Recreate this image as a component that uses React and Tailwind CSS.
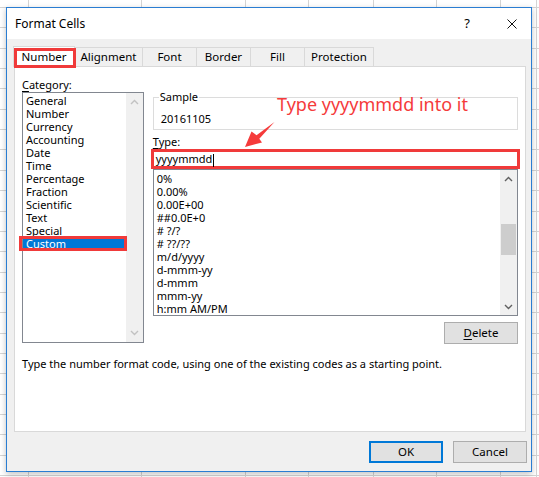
import React from 'react';

const gridCols = [28, 141, 245, 308, 373, 436, 500, 536];
const gridRows = Array.from({ length: 24 }, (_, i) => 7 + Math.round(i * 20.35));

const categories = [
  'General',
  'Number',
  'Currency',
  'Accounting',
  'Date',
  'Time',
  'Percentage',
  'Fraction',
  'Scientific',
  'Text',
  'Special',
  'Custom'
];

const formats = [
  '0%',
  '0.00%',
  '0.00E+00',
  '##0.0E+0',
  '# ?/?',
  '# ??/??',
  'm/d/yyyy',
  'd-mmm-yy',
  'd-mmm',
  'mmm-yy',
  'h:mm AM/PM'
];

const tabs = [
  { label: 'Number', width: 62, selected: true },
  { label: 'Alignment', width: 69 },
  { label: 'Font', width: 55 },
  { label: 'Border', width: 55 },
  { label: 'Fill', width: 55 },
  { label: 'Protection', width: 70 }
];

function Chevron({ up, color }) {
  return (
    <svg width="9" height="6" viewBox="0 0 9 6">
      <path
        d={up ? 'M1 5 L4.5 1.5 L8 5' : 'M1 1 L4.5 4.5 L8 1'}
        fill="none"
        stroke={color}
        strokeWidth="1.4"
      />
    </svg>
  );
}

function SpreadsheetBackground() {
  return (
    <div className="absolute inset-0 bg-white">
      {gridCols.map((x) => (
        <div key={`c${x}`} className="absolute top-0 bottom-0 w-px bg-[#d4d4d4]" style={{ left: x }} />
      ))}
      {gridRows.map((y) => (
        <div key={`r${y}`} className="absolute left-0 right-0 h-px bg-[#d4d4d4]" style={{ top: y }} />
      ))}
    </div>
  );
}

export default function App() {
  return (
    <div className="relative w-[539px] h-[477px] overflow-hidden pl-[6px] pt-[7px] font-[family-name:'Noto_Sans',sans-serif] text-[11px] text-black">
      <SpreadsheetBackground />

      <div className="relative flex h-[465px] w-[526px] flex-col border border-[#2a7dd2] bg-[#f0f0f0] shadow-[0_2px_6px_rgba(0,0,0,0.25)]">
        {/* title bar */}
        <div className="flex h-[31px] items-center bg-white pl-[8px] text-[12px]">
          <span>Format Cells</span>
          <span className="ml-auto text-[13px]">?</span>
          <svg className="ml-[37px] mr-[14px]" width="10" height="10" viewBox="0 0 10 10">
            <path d="M0.5 0.5 L9.5 9.5 M9.5 0.5 L0.5 9.5" stroke="#111" strokeWidth="1" />
          </svg>
        </div>

        {/* tabs */}
        <div className="ml-[6px] mt-[7px] flex h-[20px] items-end text-[11.5px]">
          {tabs.map((tab) => (
            <div
              key={tab.label}
              className={
                tab.selected
                  ? 'relative z-10 -mb-px flex h-[21px] items-center justify-center border border-b-0 border-[#d9d9d9] bg-white'
                  : 'relative -ml-px flex h-[19px] items-center justify-center border border-b-0 border-[#d9d9d9] bg-[#f0f0f0]'
              }
              style={{ width: tab.width }}
            >
              {tab.label}
              {tab.selected && (
                <div className="absolute left-0 top-[1px] h-[20px] w-[62px] border-[3px] border-[#f03a3a]" />
              )}
            </div>
          ))}
        </div>

        {/* panel */}
        <div className="ml-[7px] flex h-[366px] w-[512px] flex-col border border-[#d9d9d9] bg-white px-[7px] pt-[11px]">
          <div className="flex">
            <div className="w-[122px]">
              <div className="h-[14px] leading-[14px]">
                <span className="underline underline-offset-2">C</span>ategory:
              </div>
              <div className="flex h-[251px] border border-[#828790]">
                <div className="flex-1 pt-[1px]">
                  {categories.map((c) =>
                    c === 'Custom' ? (
                      <div key={c} className="relative h-[13px] bg-[#0078d7] pl-[3px] leading-[13px] text-white">
                        {c}
                        <div className="absolute -left-[4px] -right-[1px] -top-[1px] -bottom-[1px] border-[3px] border-[#f03a3a]" />
                      </div>
                    ) : (
                      <div key={c} className="h-[13px] pl-[3px] leading-[13px]">
                        {c}
                      </div>
                    )
                  )}
                </div>
                <div className="flex w-[17px] flex-col items-center justify-between bg-[#f0f0f0] py-[6px]">
                  <Chevron up color="#c2c2c2" />
                  <Chevron color="#c2c2c2" />
                </div>
              </div>
            </div>

            <div className="ml-[9px] flex w-[366px] flex-col">
              <div className="relative mt-[19px] h-[33px] border border-[#dcdcdc] pl-[7px] pt-[14px] leading-[13px]">
                <span className="absolute -top-[8px] left-[5px] bg-white px-[1px]">Sample</span>
                20161105
              </div>
              <div className="mt-[5px] h-[14px] leading-[14px]">
                <span className="underline underline-offset-2">T</span>ype:
              </div>
              <div className="-mx-[2px] h-[20px] border-[3px] border-[#f03a3a] pl-[2px] leading-[14px]">
                yyyymmdd<span className="ml-px inline-block h-[13px] w-px bg-black align-middle" />
              </div>
              <div className="flex h-[147px] border border-[#828790]">
                <div className="flex-1 pl-[3px] pt-[2px]">
                  {formats.map((f) => (
                    <div key={f} className="h-[13px] leading-[13px]">
                      {f}
                    </div>
                  ))}
                </div>
                <div className="flex w-[17px] flex-col bg-[#f0f0f0]">
                  <div className="flex h-[17px] items-center justify-center">
                    <Chevron up color="#606060" />
                  </div>
                  <div className="flex-1 px-[1px] pt-[37px]">
                    <div className="h-[31px] bg-[#cdcdcd]" />
                  </div>
                  <div className="flex h-[17px] items-center justify-center">
                    <Chevron color="#606060" />
                  </div>
                </div>
              </div>
              <button className="mt-[6px] h-[22px] w-[74px] self-end border border-[#adadad] bg-[#e1e1e1] text-[11.5px]">
                <span className="underline underline-offset-2">D</span>elete
              </button>
            </div>
          </div>
          <div className="mt-[13px] leading-[14px]">
            Type the number format code, using one of the existing codes as a starting point.
          </div>
        </div>

        {/* buttons */}
        <div className="mt-[9px] flex justify-end gap-[10px] pr-[4px] text-[11.5px]">
          <button className="h-[22px] w-[74px] border-2 border-[#0078d7] bg-[#e1e1e1]">OK</button>
          <button className="h-[22px] w-[74px] border border-[#adadad] bg-[#e1e1e1]">Cancel</button>
        </div>
      </div>

      {/* annotation */}
      <div className="absolute left-[277px] top-[92px] text-[18px] leading-[24px] text-[#f53b3b]">
        Type yyyymmdd into it
      </div>
      <svg className="absolute left-0 top-0" width="539" height="477" viewBox="0 0 539 477">
        <polygon
          points="245,147 251.5,131.5 256.5,135.2 274.5,122 259.3,138.8 262,142.5"
          fill="#f53b3b"
        />
      </svg>
    </div>
  );
}
